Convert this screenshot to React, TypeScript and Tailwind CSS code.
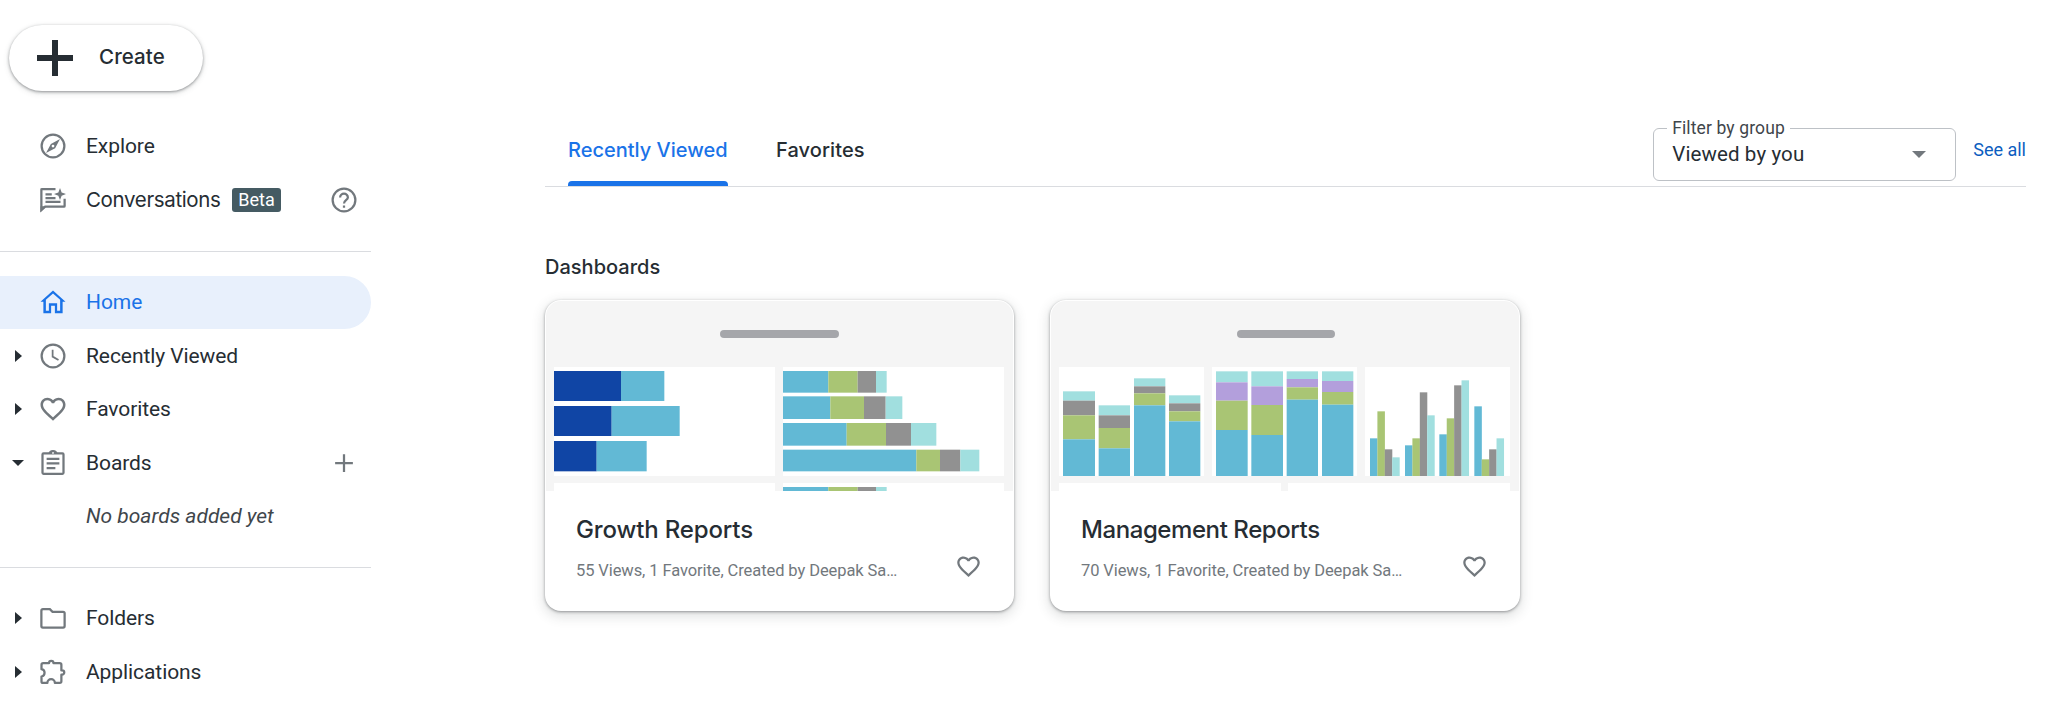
import React from 'react';
import clsx from 'clsx';

type Segment = [size: number, color: string];

const BLUE = '#62b9d5';
const NAVY = '#1045a5';
const GREEN = '#a9c574';
const GRAY = '#919191';
const TEAL = '#a1dfdf';
const PURPLE = '#b39fdc';

interface IconProps {
  className?: string;
  children: React.ReactNode;
}

const Icon: React.FC<IconProps> = ({ className = '', children }) => (
  <svg
    viewBox="0 0 24 24"
    fill="none"
    stroke="currentColor"
    strokeWidth="1.8"
    className={clsx('shrink-0', className || 'size-[30px] text-[#72787d]')}
  >
    {children}
  </svg>
);

const ExploreIcon = () => (
  <Icon>
    <circle cx="12" cy="12" r="9.1" />
    <path
      d="M17.6 6.4l-3.9 7.3-7.3 3.9 3.9-7.3zM12 10.9a1.1 1.1 0 100 2.2 1.1 1.1 0 000-2.2z"
      fill="currentColor"
      fillRule="evenodd"
      stroke="none"
    />
  </Icon>
);

const ConversationsIcon = () => (
  <Icon>
    <path d="M14 3.2H3.2q-.5 0-.5.5V20l3-2.7h15q.6 0 .6-.6V11" />
    <path d="M2 21.8V17h4.8z" fill="currentColor" stroke="none" />
    <path d="M6 7.4h5M6 10.4h8M6 13.5h12" />
    <path d="M17.6 2.4l1.3 3.5 3.5 1.3-3.5 1.3-1.3 3.5-1.3-3.5-3.5-1.3 3.5-1.3z" fill="currentColor" stroke="none" />
  </Icon>
);

const HelpIcon = () => (
  <Icon>
    <circle cx="12" cy="12" r="9.1" />
    <path d="M8.9 10a3.1 3.1 0 116.2 0c0 2-3.1 2.4-3.1 4.7" />
    <path d="M11.1 16.4h1.8v1.8h-1.8z" fill="currentColor" stroke="none" />
  </Icon>
);

const HomeIcon = () => (
  <Icon className="size-[30px] text-[#1a73e8]">
    <path d="M4.3 11.8V21h6.2v-6h3v6h6.2v-9.2H22L12 2.7 2 11.8z" fill="currentColor" stroke="none" />
    <path d="M12 5.1l5.7 5.1V19h-2.4v-6H8.7v6H6.3v-8.8z" fill="#e8f0fc" stroke="none" />
  </Icon>
);

const ClockIcon = () => (
  <Icon>
    <circle cx="12" cy="12" r="9.1" />
    <path d="M11.7 7v5.5l4.7 2.7" strokeWidth="1.4" />
  </Icon>
);

const HeartIcon: React.FC<{ className?: string }> = ({ className }) => (
  <Icon className={className}>
    <path
      d="M16.5 3c-1.74 0-3.41.81-4.5 2.09C10.91 3.81 9.24 3 7.5 3 4.42 3 2 5.42 2 8.5c0 3.78 3.4 6.86 8.55 11.54L12 21.35l1.45-1.32C18.6 15.36 22 12.28 22 8.5 22 5.42 19.58 3 16.5 3zm-4.4 15.55l-.1.1-.1-.1C7.14 14.24 4 11.39 4 8.5 4 6.5 5.5 5 7.5 5c1.54 0 3.04.99 3.57 2.36h1.87C13.46 5.99 14.96 5 16.5 5c2 0 3.5 1.5 3.5 3.5 0 2.89-3.14 5.74-7.9 10.05z"
      fill="currentColor"
      stroke="none"
    />
  </Icon>
);

const BoardIcon = () => (
  <Icon>
    <rect x="3.6" y="4.3" width="16.8" height="16.3" rx=".8" />
    <path d="M9 4c.3-1.2 1.4-2 3-2s2.7.8 3 2z" fill="currentColor" strokeWidth="1" />
    <circle cx="12" cy="3.9" r=".7" fill="#fff" stroke="none" />
    <path d="M6.9 8.6h10.2M6.9 12.3h10.2M6.9 16.1h7" />
  </Icon>
);

const FolderIcon = () => (
  <Icon>
    <path d="M3.9 4.9h5.6l2.1 2.1h8.5q1.2 0 1.2 1.2v10.2q0 1.2-1.2 1.2H3.9q-1.2 0-1.2-1.2V6.1q0-1.2 1.2-1.2z" />
  </Icon>
);

const ExtensionIcon = () => (
  <Icon>
    <path
      d="M4.2 4.9H8.8a1.8 1.8 0 013.6 0h5q1.3 0 1.3 1.3v4.5h.6a1.7 1.7 0 010 3.4h-.6v5.3q0 1.3-1.3 1.3h-3.9a3 3 0 00-6 0H4q-1.2 0-1.2-1.2v-3.9a3 3 0 000-5.9V6.2q0-1.3 1.4-1.3z"
      strokeLinejoin="round"
    />
  </Icon>
);

const StackedBars: React.FC<{ rows: { y: number; h: number; segments: Segment[] }[] }> = ({ rows }) => (
  <svg viewBox="0 0 663 327" className="h-[109px] w-[221px]">
    {rows.map((row) => {
      let x = 0;
      return row.segments.map(([size, color]) => {
        const start = x;
        x += size;
        return <rect key={`${row.y}-${start}`} x={start} y={row.y} width={size} height={row.h} fill={color} />;
      });
    })}
  </svg>
);

// every column lists its segments from top to bottom
const StackedColumns: React.FC<{ columns: { x: number; w: number; tops: number[] }[]; colors: string[] }> = ({
  columns,
  colors,
}) => (
  <svg viewBox="0 0 435 327" className="h-[109px] w-[145px]">
    {columns.map((col) =>
      col.tops.map((top, i) => (
        <rect
          key={`${col.x}-${top}`}
          x={col.x}
          y={top}
          width={col.w}
          height={(col.tops[i + 1] ?? 327) - top}
          fill={colors[i]}
        />
      ))
    )}
  </svg>
);

const GROUP_COLORS = [BLUE, GREEN, GRAY, TEAL];

const GroupedColumns: React.FC<{ groups: { x: number; tops: number[] }[] }> = ({ groups }) => (
  <svg viewBox="0 0 435 327" className="h-[109px] w-[145px]">
    {groups.map((group) =>
      group.tops.map((top, i) => (
        <rect key={`${group.x}-${i}`} x={group.x + i * 22.2} y={top} width="22.5" height={327 - top} fill={GROUP_COLORS[i]} />
      ))
    )}
  </svg>
);

const regionRows = [
  { y: 12, h: 90, segments: [[201, NAVY], [130, BLUE]] as Segment[] },
  { y: 117, h: 90, segments: [[173, NAVY], [204, BLUE]] as Segment[] },
  { y: 222, h: 91, segments: [[128, NAVY], [150, BLUE]] as Segment[] },
];

const channelRows = [
  { y: 12, h: 65, segments: [[136, BLUE], [88, GREEN], [55, GRAY], [32, TEAL]] as Segment[] },
  { y: 88, h: 68, segments: [[142, BLUE], [101, GREEN], [65, GRAY], [50, TEAL]] as Segment[] },
  { y: 168, h: 68, segments: [[191, BLUE], [118, GREEN], [75, GRAY], [76, TEAL]] as Segment[] },
  { y: 248, h: 65, segments: [[400, BLUE], [71, GREEN], [61, GRAY], [57, TEAL]] as Segment[] },
];

const GrowthPreview = () => (
  <div className="flex h-[190px] flex-col overflow-hidden rounded-t-[15px] bg-[#f5f5f5] pt-[29px] pr-[9px] pl-2">
    <div className="ml-[166px] h-2 w-[119px] shrink-0 rounded-full bg-[#a5a6aa]" />
    <div className="mt-[28.67px] flex shrink-0 justify-between">
      <div className="bg-white">
        <StackedBars rows={regionRows} />
      </div>
      <div className="bg-white">
        <StackedBars rows={channelRows} />
      </div>
    </div>
    <div className="mt-[7.33px] flex h-2 shrink-0 justify-between">
      <div className="w-[221px] bg-white" />
      <div className="w-[221px] overflow-hidden bg-white">
        <StackedBars rows={channelRows} />
      </div>
    </div>
  </div>
);

const ManagementPreview = () => (
  <div className="flex h-[190px] flex-col overflow-hidden rounded-t-[15px] bg-[#f5f5f5] pt-[29px] pr-[9px] pl-2">
    <div className="ml-[177.5px] h-2 w-[98px] shrink-0 rounded-full bg-[#a5a6aa]" />
    <div className="mt-[28.67px] flex shrink-0 justify-between">
      <div className="bg-white">
        <StackedColumns
          colors={[TEAL, GRAY, GREEN, BLUE]}
          columns={[
            { x: 12, w: 96, tops: [73, 101, 145, 217] },
            { x: 119, w: 94, tops: [115, 145, 183, 244] },
            { x: 225, w: 94, tops: [34, 58, 79, 115] },
            { x: 330, w: 94, tops: [85, 109, 133, 163] },
          ]}
        />
      </div>
      <div className="bg-white">
        <StackedColumns
          colors={[TEAL, PURPLE, GREEN, BLUE]}
          columns={[
            { x: 12, w: 95, tops: [13, 46, 101, 189] },
            { x: 118, w: 95, tops: [13, 58, 114, 204] },
            { x: 224, w: 94, tops: [13, 36, 61, 98] },
            { x: 330, w: 94, tops: [13, 42, 75, 113] },
          ]}
        />
      </div>
      <div className="bg-white">
        <GroupedColumns
          groups={[
            { x: 15, tops: [214, 133, 247, 271] },
            { x: 120, tops: [235, 214, 76, 145] },
            { x: 223, tops: [202, 154, 55, 40] },
            { x: 328, tops: [118, 277, 247, 214] },
          ]}
        />
      </div>
    </div>
    <div className="mt-[7.33px] flex h-2 shrink-0 justify-between">
      <div className="w-[222px] bg-white" />
      <div className="w-[222px] bg-white" />
    </div>
  </div>
);

interface DashboardCardProps {
  title: string;
  titleClassName?: string;
  meta: string;
  className?: string;
  children: React.ReactNode;
}

const DashboardCard: React.FC<DashboardCardProps> = ({ title, titleClassName, meta, className, children }) => (
  <article
    className={clsx(
      'h-[311px] rounded-2xl bg-white p-px shadow-[0_1px_3px_rgba(60,64,67,0.5),0_4px_12px_2px_rgba(60,64,67,0.15)]',
      className
    )}
  >
    {children}
    <div className="flex justify-between pr-[31px] pl-[30px]">
      <div>
        <h3 className={clsx("mt-[23px] font-['Inter',sans-serif] text-[24px] leading-8 font-medium", titleClassName)}>
          {title}
        </h3>
        <p className="mt-[13px] text-[16.5px] leading-6 tracking-[-0.09px] whitespace-nowrap text-[#72787d]">{meta}</p>
      </div>
      <HeartIcon className="mt-[62px] size-[27px] text-[#72787d]" />
    </div>
  </article>
);

interface NavItemProps {
  icon: React.ReactNode;
  label: string;
  caret?: 'right' | 'down';
  active?: boolean;
  labelClassName?: string;
  children?: React.ReactNode;
}

const NavItem: React.FC<NavItemProps> = ({ icon, label, caret, active = false, labelClassName, children }) => (
  <li
    className={clsx(
      'flex h-[53.5px] items-center pr-3 pl-[9px]',
      active && 'rounded-r-full bg-[#e8f0fc] text-[#1a73e8]'
    )}
  >
    <span className="flex w-[29px] shrink-0 items-center">
      {caret && (
        <svg viewBox="0 0 18 18" className="size-[18px]" fill="#262d33">
          {caret === 'right' ? <path d="M6 3l7 6-7 6z" /> : <path d="M3 6h12l-6 6z" />}
        </svg>
      )}
    </span>
    {icon}
    <span className={clsx('ml-[18px] leading-7', labelClassName ?? 'text-[21px] tracking-[-0.08px]')}>{label}</span>
    {children}
  </li>
);

const Sidebar = () => (
  <nav className="w-[371px] shrink-0 pt-[24.5px]">
    <button className="ml-[9px] flex h-[66px] w-[194px] items-center rounded-full bg-white pl-7 shadow-[0_1px_3px_rgba(60,64,67,0.5),0_2px_6px_rgba(60,64,67,0.15)]">
      <svg viewBox="0 0 36 36" className="size-9" fill="#262d33">
        <path d="M15 0h6v15h15v6H21v15h-6V21H0v-6h15z" />
      </svg>
      <span className="ml-[26px] font-['Inter',sans-serif] text-[20.5px] font-medium tracking-[0.1px]">Create</span>
    </button>
    <ul className="mt-[29px]">
      <NavItem icon={<ExploreIcon />} label="Explore" />
      <NavItem
        icon={<ConversationsIcon />}
        label="Conversations"
        labelClassName="font-['Inter',sans-serif] text-[20.5px] tracking-[-0.35px]"
      >
        <span className="mr-[48px] ml-auto flex h-6 w-[49px] items-center justify-center rounded-[3px] bg-[#455b63] text-[18px] text-white">
          Beta
        </span>
        <HelpIcon />
      </NavItem>
    </ul>
    <ul className="mt-6 border-t border-[#dadce0] pt-6">
      <NavItem icon={<HomeIcon />} label="Home" active />
      <NavItem icon={<ClockIcon />} label="Recently Viewed" caret="right" />
      <NavItem icon={<HeartIcon />} label="Favorites" caret="right" />
      <NavItem icon={<BoardIcon />} label="Boards" caret="down">
        <span className="ml-auto">
          <Icon>
            <path d="M12 4.9v14.2M4.9 12h14.2" />
          </Icon>
        </span>
      </NavItem>
      <li className="flex h-[53.5px] items-center pl-[86px] text-[21px] text-[#3f464b] italic">No boards added yet</li>
    </ul>
    <ul className="mt-[23.5px] border-t border-[#dadce0] pt-6">
      <NavItem icon={<FolderIcon />} label="Folders" caret="right" />
      <NavItem icon={<ExtensionIcon />} label="Applications" caret="right" />
    </ul>
  </nav>
);

export default function App() {
  return (
    <div className="flex h-[727px] w-[2048px] overflow-hidden bg-white font-['Roboto',sans-serif] text-[#262d33]">
      <Sidebar />
      <main className="ml-[174px] w-[1481px]">
        <header className="mt-[114px] flex h-[73px] items-end justify-between border-b border-[#dadce0]">
          <div className="flex gap-12 pl-[23px] font-['Inter',sans-serif] text-[20px] font-medium">
            <div className="flex h-[50px] w-[160px] flex-col justify-between text-[#1a73e8]">
              <span className="leading-7 whitespace-nowrap">Recently Viewed</span>
              <span className="h-[5px] rounded-t-[4px] bg-[#1a73e8]" />
            </div>
            <span className="leading-7 tracking-[0.1px]">Favorites</span>
          </div>
          <div className="flex items-center">
            <fieldset className="mb-[5px] h-[65px] w-[303px] rounded-[6px] border border-[#bdc1c6] pr-[29px] pl-[13px]">
              <legend className="px-[5px] text-[17.5px] leading-6 tracking-[0.12px] text-[#3f464b]">Filter by group</legend>
              <div className="flex items-center justify-between pl-[5px]">
                <span className="text-[20.5px] leading-7 tracking-[0.12px]">Viewed by you</span>
                <svg viewBox="0 0 14 7" className="h-[7px] w-[14px]" fill="#72787d">
                  <path d="M0 0h14L7 7z" />
                </svg>
              </div>
            </fieldset>
            <a className="mb-[4px] ml-[17px] text-[18px] text-[#0b5dc0]">See all</a>
          </div>
        </header>
        <section>
          <h2 className="mt-[66px] font-['Inter',sans-serif] text-[20px] leading-7 font-medium tracking-[0.02px]">
            Dashboards
          </h2>
          <div className="mt-[19px] flex gap-9">
            <DashboardCard
              className="w-[469px]"
              title="Growth Reports"
              titleClassName="tracking-[-0.15px]"
              meta="55 Views, 1 Favorite, Created by Deepak Sa…"
            >
              <GrowthPreview />
            </DashboardCard>
            <DashboardCard
              className="w-[470px]"
              title="Management Reports"
              titleClassName="tracking-[-0.42px]"
              meta="70 Views, 1 Favorite, Created by Deepak Sa…"
            >
              <ManagementPreview />
            </DashboardCard>
          </div>
        </section>
      </main>
    </div>
  );
}
